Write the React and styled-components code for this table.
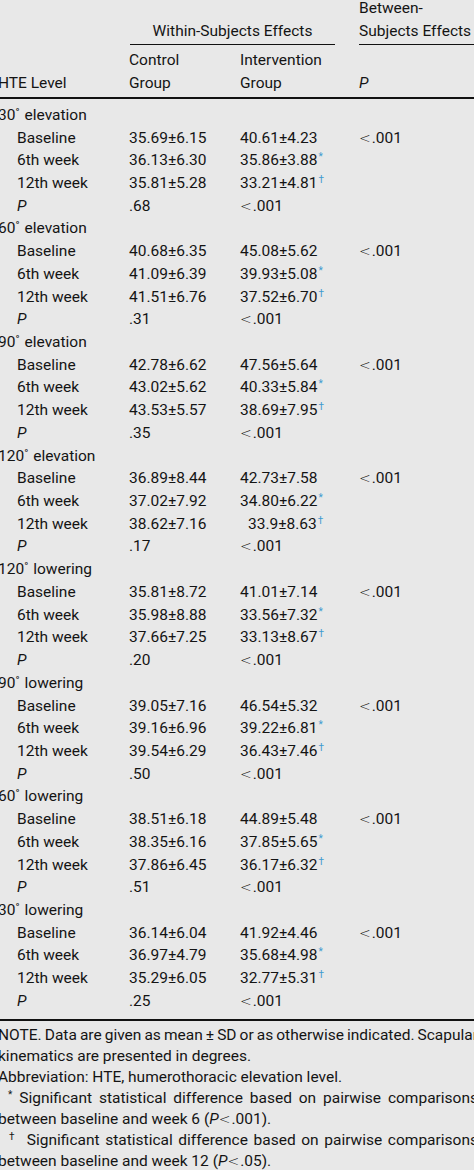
import React from "react";
import styled, { createGlobalStyle } from "styled-components";

const Global = createGlobalStyle`
  html, body {
    margin: 0;
    padding: 0;
    background: #e8e8e8;
    overflow: hidden;
  }
  body {
    font-family: Roboto, "Open Sans", "DejaVu Sans", sans-serif;
    color: #141414;
  }
`;

const Page = styled.div`
  width: 480px;
  margin-left: -2px;
  font-size: 15.5px;
  line-height: 22.7px;
`;

const HeadTop = styled.div`
  display: grid;
  grid-template-columns: 132px 205px 24px 1fr;
  margin-top: -3px;
`;

const SpanHead = styled.div`
  grid-column: ${(p) => p.$col};
  align-self: end;
  text-align: ${(p) => (p.$center ? "center" : "left")};
  border-bottom: 1.5px solid #111;
  padding-bottom: 2px;
  white-space: nowrap;
`;

const HeadBottom = styled.div`
  display: grid;
  grid-template-columns: 131px 111px 119px 1fr;
  padding-top: 3.5px;
  padding-bottom: 3px;
  border-bottom: 2px solid #111;
`;

const HeadCell = styled.div`
  align-self: end;
  font-style: ${(p) => (p.$italic ? "italic" : "normal")};
`;

const Body = styled.div`
  padding-top: 4.5px;
  padding-bottom: 6px;
  border-bottom: 2px solid #111;
`;

const Row = styled.div`
  display: grid;
  grid-template-columns: 131px 111px 119px 1fr;
  height: 22.72px;
  white-space: nowrap;
`;

const Label = styled.div`
  padding-left: ${(p) => (p.$indent ? "19px" : "0")};
  font-style: ${(p) => (p.$italic ? "italic" : "normal")};
`;

const Value = styled.div`
  padding-left: ${(p) => p.$shift || 0}px;
`;

const Lt = styled.span`
  font-family: "DejaVu Sans", sans-serif;
  font-weight: 300;
  font-size: 14px;
  margin-right: 1px;
`;

const Mark = styled.sup`
  color: #3f9bd0;
  font-size: 10px;
  line-height: 0;
  vertical-align: 5px;
  margin-left: 1px;
`;

const Deg = styled.span`
  font-size: 11px;
  vertical-align: 4px;
  line-height: 0;
  margin-right: 5px;
`;

const Notes = styled.div`
  padding-top: 4.5px;
  font-size: 15.5px;
  line-height: 21px;
`;

const NoteLine = styled.div`
  white-space: nowrap;
  word-spacing: ${(p) => (p.$full ? "-1.5px" : "0")};
  text-align: justify;
  text-align-last: ${(p) => (p.$full ? "justify" : "left")};
  padding-left: ${(p) => p.$indent || 0}px;
`;

const NoteMark = styled.sup`
  font-size: 10px;
  line-height: 0;
  vertical-align: 5px;
  margin-right: ${(p) => p.$gap}px;
`;

const It = styled.i``;

const LessThan = () => <Lt>&lt;</Lt>;

const sections = [
  ["30", "elevation", [["35.69±6.15", "40.61±4.23"], ["36.13±6.30", "35.86±3.88"], ["35.81±5.28", "33.21±4.81"]], ".68"],
  ["60", "elevation", [["40.68±6.35", "45.08±5.62"], ["41.09±6.39", "39.93±5.08"], ["41.51±6.76", "37.52±6.70"]], ".31"],
  ["90", "elevation", [["42.78±6.62", "47.56±5.64"], ["43.02±5.62", "40.33±5.84"], ["43.53±5.57", "38.69±7.95"]], ".35"],
  ["120", "elevation", [["36.89±8.44", "42.73±7.58"], ["37.02±7.92", "34.80±6.22"], ["38.62±7.16", "33.9±8.63", 8]], ".17"],
  ["120", "lowering", [["35.81±8.72", "41.01±7.14"], ["35.98±8.88", "33.56±7.32"], ["37.66±7.25", "33.13±8.67"]], ".20"],
  ["90", "lowering", [["39.05±7.16", "46.54±5.32"], ["39.16±6.96", "39.22±6.81"], ["39.54±6.29", "36.43±7.46"]], ".50"],
  ["60", "lowering", [["38.51±6.18", "44.89±5.48"], ["38.35±6.16", "37.85±5.65"], ["37.86±6.45", "36.17±6.32"]], ".51"],
  ["30", "lowering", [["36.14±6.04", "41.92±4.46"], ["36.97±4.79", "35.68±4.98"], ["35.29±6.05", "32.77±5.31"]], ".25"],
];

const timeLabels = ["Baseline", "6th week", "12th week"];
const marks = [null, "*", "†"];

export default function App() {
  return (
    <>
      <Global />
      <Page>
        <HeadTop>
          <SpanHead $col="2" $center>
            Within-Subjects Effects
          </SpanHead>
          <SpanHead $col="4">
            Between-
            <br />
            Subjects Effects
          </SpanHead>
        </HeadTop>
        <HeadBottom>
          <HeadCell>HTE Level</HeadCell>
          <HeadCell>
            Control
            <br />
            Group
          </HeadCell>
          <HeadCell>
            Intervention
            <br />
            Group
          </HeadCell>
          <HeadCell $italic>P</HeadCell>
        </HeadBottom>
        <Body>
          {sections.map(([deg, kind, rows, p]) => (
            <React.Fragment key={deg + kind}>
              <Row>
                <Label>
                  {deg}
                  <Deg>°</Deg>
                  {kind}
                </Label>
              </Row>
              {rows.map((r, i) => (
                <Row key={i}>
                  <Label $indent>{timeLabels[i]}</Label>
                  <Value>{r[0]}</Value>
                  <Value $shift={r[2]}>
                    {r[1]}
                    {marks[i] && <Mark>{marks[i]}</Mark>}
                  </Value>
                  <Value>
                    {i === 0 && (
                      <>
                        <LessThan />
                        .001
                      </>
                    )}
                  </Value>
                </Row>
              ))}
              <Row>
                <Label $indent $italic>
                  P
                </Label>
                <Value>{p}</Value>
                <Value>
                  <LessThan />
                  .001
                </Value>
                <Value />
              </Row>
            </React.Fragment>
          ))}
        </Body>
        <Notes>
          <NoteLine $full>NOTE. Data are given as mean ± SD or as otherwise indicated. Scapular</NoteLine>
          <NoteLine>kinematics are presented in degrees.</NoteLine>
          <NoteLine>Abbreviation: HTE, humerothoracic elevation level.</NoteLine>
          <NoteLine $full $indent={10}>
            <NoteMark $gap={7}>*</NoteMark>Significant statistical difference based on pairwise comparisons
          </NoteLine>
          <NoteLine>
            between baseline and week 6 (<It>P</It>
            <LessThan />
            .001).
          </NoteLine>
          <NoteLine $full $indent={11}>
            <NoteMark $gap={9}>†</NoteMark>Significant statistical difference based on pairwise comparisons
          </NoteLine>
          <NoteLine>
            between baseline and week 12 (<It>P</It>
            <LessThan />
            .05).
          </NoteLine>
        </Notes>
      </Page>
    </>
  );
}
